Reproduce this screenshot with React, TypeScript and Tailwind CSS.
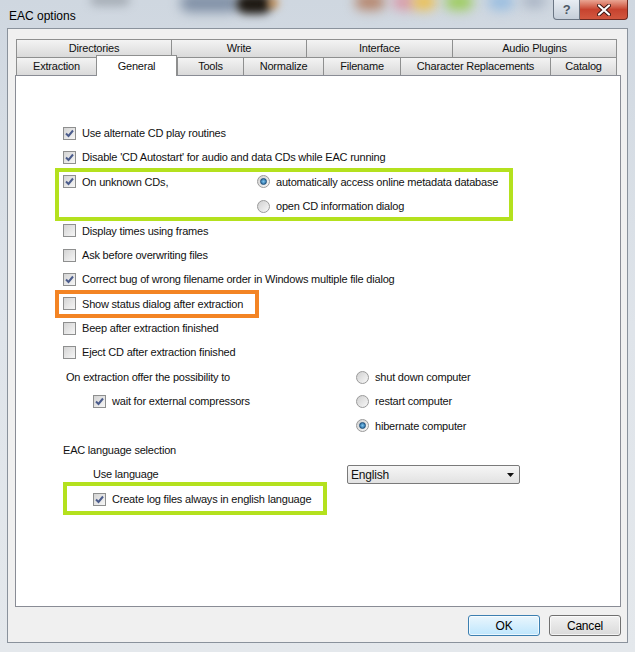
import React from 'react';

const CheckBox = ({ checked }: { checked?: boolean }) => (
    <span className="flex h-[13px] w-[13px] shrink-0 items-center justify-center border border-[#8e8f8f] bg-linear-to-br from-[#d4d4d4] to-[#f6f6f6]">
        {checked && (
            <svg width="11" height="11" viewBox="0 0 11 11">
                <path d="M2 5.5 L4.5 8 L9 2.5" fill="none" stroke="#4b5c8c" strokeWidth="2" />
            </svg>
        )}
    </span>
);

const Radio = ({ checked }: { checked?: boolean }) => (
    <span className="flex h-[13px] w-[13px] shrink-0 items-center justify-center rounded-full border border-[#9a9a9a] bg-linear-to-br from-[#d0d0d0] to-[#f8f8f8]">
        {checked && (
            <span className="h-[7px] w-[7px] rounded-full border border-[#1d4f7a] bg-radial from-[#7cc4ee] to-[#1a5f96]" />
        )}
    </span>
);

const CheckRow = ({ label, checked }: { label: string; checked?: boolean }) => (
    <div className="flex h-[24.4px] items-center gap-[6px]">
        <CheckBox checked={checked} />
        <span>{label}</span>
    </div>
);

const RadioRow = ({ label, checked }: { label: string; checked?: boolean }) => (
    <div className="flex h-[24.4px] items-center gap-[6px]">
        <Radio checked={checked} />
        <span>{label}</span>
    </div>
);

const topTabs = [
    { name: 'Directories', w: 'w-[155px]' },
    { name: 'Write', w: 'w-[135px]' },
    { name: 'Interface', w: 'w-[146px]' },
    { name: 'Audio Plugins', w: 'w-[165px]' },
];

const bottomTabs = [
    { name: 'Extraction', w: 'w-[80px]' },
    { name: 'General', w: 'w-[81px]' },
    { name: 'Tools', w: 'w-[66px]' },
    { name: 'Normalize', w: 'w-[80px]' },
    { name: 'Filename', w: 'w-[77px]' },
    { name: 'Character Replacements', w: 'w-[150px]' },
    { name: 'Catalog', w: 'w-[67px]' },
];

const tabClass = 'flex h-[18px] items-center justify-center border-l border-t border-[#8e8f8f] bg-linear-to-b from-[#f3f3f3] to-[#dadada] last:border-r';

const App: React.FC = () => {
    return (
        <div className="relative flex h-[652px] w-[635px] flex-col overflow-hidden bg-linear-to-b from-[#cfd7e0] via-[#dfe4ea] to-[#e4e8ec] font-['Liberation_Sans',Arial,sans-serif] text-[11px] tracking-[-0.2px] text-[#111]">
            {/* title bar */}
            <div className="relative h-[28px] shrink-0">
                <div className="absolute left-[90px] top-[-6px] h-[12px] w-[40px] rounded-full bg-[#7d848c] opacity-50 blur-[5px]" />
                <div className="absolute left-[180px] top-[-6px] h-[18px] w-[60px] rounded-full bg-[#7f8fa5] blur-[6px]" />
                <div className="absolute left-[236px] top-[-6px] h-[20px] w-[36px] rounded-full bg-[#1e1913] blur-[4px]" />
                <div className="absolute left-[268px] top-[-2px] h-[10px] w-[10px] rounded-full bg-[#d08a3c] blur-[4px]" />
                <div className="absolute left-[355px] top-[-6px] h-[16px] w-[30px] rounded-full bg-[#b5846a] blur-[6px]" />
                <div className="absolute left-[392px] top-[-6px] h-[16px] w-[24px] rounded-full bg-[#d99aa8] blur-[6px]" />
                <div className="absolute left-[412px] top-[-6px] h-[16px] w-[24px] rounded-full bg-[#ecc050] blur-[6px]" />
                <div className="absolute left-[445px] top-[-6px] h-[16px] w-[28px] rounded-full bg-[#9ccc5a] blur-[6px]" />
                <div className="absolute left-[488px] top-[-6px] h-[16px] w-[26px] rounded-full bg-[#98bde0] blur-[6px]" />
                <div className="absolute left-[522px] top-[-6px] h-[14px] w-[24px] rounded-full bg-[#a9b4c4] blur-[6px]" />
                <span className="absolute left-[9px] top-[7px] text-[12px] tracking-normal text-black">EAC options</span>
                <div className="absolute right-[7px] top-0 flex">
                    <div className="flex h-[20px] w-[27px] items-center justify-center rounded-bl-[4px] border border-t-0 border-[#6b7684] bg-linear-to-b from-[#e8edf3] to-[#c5ced9] text-[13px] font-bold text-[#4d5866]">
                        ?
                    </div>
                    <div className="flex h-[20px] w-[48px] items-center justify-center rounded-br-[4px] border border-l-0 border-t-0 border-[#6e2a22] bg-linear-to-b from-[#e9a593] via-[#c7432f] to-[#d2573f]">
                        <svg width="14" height="12" viewBox="0 0 14 12">
                            <path d="M2 1.5 L12 10.5 M12 1.5 L2 10.5" stroke="#3a1410" strokeWidth="4" strokeLinecap="round" />
                            <path d="M2 1.5 L12 10.5 M12 1.5 L2 10.5" stroke="#ffffff" strokeWidth="2.2" strokeLinecap="round" />
                        </svg>
                    </div>
                </div>
            </div>

            {/* client area */}
            <div className="mx-[7px] mb-[9px] flex flex-1 flex-col border border-[#8a929c] bg-[#f0f0f0] pl-[8px] pt-[10px]">
                <div className="flex">
                    {topTabs.map(t => (
                        <div key={t.name} className={`${tabClass} ${t.w}`}>{t.name}</div>
                    ))}
                </div>
                <div className="flex h-[18px] items-end">
                    {bottomTabs.map(t =>
                        t.name === 'General' ? (
                            <div key={t.name} className={`relative z-10 -mb-px flex h-[21px] items-start justify-center border-x border-t border-[#8e8f8f] bg-white pt-[2px] ${t.w}`}>
                                {t.name}
                            </div>
                        ) : (
                            <div key={t.name} className={`${tabClass} ${t.w}`}>{t.name}</div>
                        )
                    )}
                </div>

                {/* General page */}
                <div className="-ml-px flex h-[532px] w-[606px] flex-col border border-[#898c95] bg-white pl-[47px] pt-[45px]">
                    <CheckRow label="Use alternate CD play routines" checked />
                    <CheckRow label="Disable 'CD Autostart' for audio and data CDs while EAC running" checked />

                    <div className="relative flex">
                        <div className="flex w-[194px] flex-col">
                            <CheckRow label="On unknown CDs," checked />
                        </div>
                        <div className="flex flex-col">
                            <RadioRow label="automatically access online metadata database" checked />
                            <RadioRow label="open CD information dialog" />
                        </div>
                        <div className="pointer-events-none absolute -bottom-[2px] -left-[8px] -top-[2px] w-[458px] border-4 border-[#b4e11e]" />
                    </div>

                    <CheckRow label="Display times using frames" />
                    <CheckRow label="Ask before overwriting files" />
                    <CheckRow label="Correct bug of wrong filename order in Windows multiple file dialog" checked />
                    <div className="relative">
                        <CheckRow label="Show status dialog after extraction" />
                        <div className="pointer-events-none absolute -bottom-[2px] -left-[8px] -top-[2px] w-[204px] border-4 border-[#f38424]" />
                    </div>
                    <CheckRow label="Beep after extraction finished" />
                    <CheckRow label="Eject CD after extraction finished" />

                    <div className="flex">
                        <div className="flex w-[293px] flex-col">
                            <div className="flex h-[24.4px] items-center pl-[3px]">On extraction offer the possibility to</div>
                            <div className="pl-[30px]">
                                <CheckRow label="wait for external compressors" checked />
                            </div>
                        </div>
                        <div className="flex flex-col">
                            <RadioRow label="shut down computer" />
                            <RadioRow label="restart computer" />
                            <RadioRow label="hibernate computer" checked />
                        </div>
                    </div>

                    <div className="flex h-[24.4px] items-center">EAC language selection</div>
                    <div className="flex h-[24.4px] items-center">
                        <span className="w-[284px] pl-[30px]">Use language</span>
                        <div className="flex h-[19px] w-[173px] items-center justify-between rounded-[2px] border border-[#7a7a7a] bg-linear-to-b from-[#f6f6f6] to-[#e2e2e2] pl-[3px] pr-[5px] text-[12px]">
                            <span>English</span>
                            <svg width="7" height="4" viewBox="0 0 7 4">
                                <path d="M0 0 H7 L3.5 4 Z" fill="#111" />
                            </svg>
                        </div>
                    </div>
                    <div className="relative pl-[30px]">
                        <CheckRow label="Create log files always in english language" checked />
                        <div className="pointer-events-none absolute -bottom-[4px] -top-[5px] left-0 w-[264px] border-4 border-[#b4e11e]" />
                    </div>
                </div>

                {/* buttons */}
                <div className="-ml-px mt-[8px] flex w-[606px] justify-end gap-[9px]">
                    <button className="h-[21px] w-[72px] rounded-[3px] border border-[#3c7fb1] bg-linear-to-b from-[#eaf6fd] to-[#bee6fd] text-[12px] text-black shadow-[inset_0_0_0_1px_#ffffffaa]">
                        OK
                    </button>
                    <button className="h-[21px] w-[72px] rounded-[3px] border border-[#707070] bg-linear-to-b from-[#f2f2f2] to-[#dadada] text-[12px] text-black shadow-[inset_0_0_0_1px_#ffffffaa]">
                        Cancel
                    </button>
                </div>
            </div>
        </div>
    );
};

export default App;
